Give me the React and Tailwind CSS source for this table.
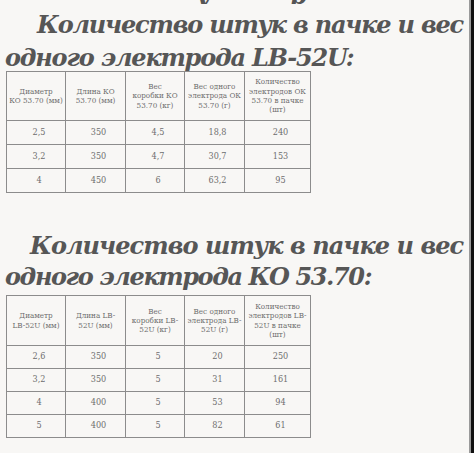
import React from "react";

const headFont = { fontFamily: '"DejaVu Serif", serif' };
const cellFont = { fontFamily: '"DejaVu Serif Condensed", "DejaVu Serif", serif' };

function Table({ head, rows, headH, rowH, className }) {
  const widths = ["w-[59px]", "w-[60px]", "w-[59px]", "w-[60px]", "w-[66px]"];
  return (
    <table className={`border-collapse table-fixed ml-[6px] w-[305px] text-[#6e6e6e] ${className}`} style={cellFont}>
      <tbody>
        <tr className={headH}>
          {head.map((lines, i) => (
            <td key={i} className={`${widths[i]} border border-[#8c8c8c] text-center align-middle text-[8px] leading-[9.3px] p-0`}>
              {lines.map((l, j) => (
                <div key={j} className="whitespace-nowrap">{l}</div>
              ))}
            </td>
          ))}
        </tr>
        {rows.map((r, i) => (
          <tr key={i} className={rowH}>
            {r.map((c, j) => (
              <td key={j} className="border border-[#8c8c8c] text-center align-middle text-[9px] p-0 pl-[6px]">
                {c}
              </td>
            ))}
          </tr>
        ))}
      </tbody>
    </table>
  );
}

export default function App() {
  return (
    <div className="w-[474px] h-[453px] flex bg-[#f8f7f5] overflow-hidden">
      <div className="flex-1 flex flex-col">
        <div className="h-[4px] overflow-hidden relative">
          <div className="absolute left-[196px] top-[-22px] text-[24px] font-bold italic text-[#555]" style={headFont}>у</div>
          <div className="absolute left-[290px] top-[-22px] text-[24px] font-bold italic text-[#555]" style={headFont}>р</div>
        </div>
        <div className="text-[24px] leading-[33px] tracking-[-1.2px] font-bold italic text-[#565656] mt-[4px] pl-[5px]" style={headFont}>
          <div className="pl-[32px] whitespace-nowrap">Количество штук в пачке и вес</div>
          <div className="whitespace-nowrap">одного электрода LB-52U:</div>
        </div>
        <Table
          className="mt-[-3px]"
          headH="h-[49px]"
          rowH="h-[24px]"
          head={[
            ["Диаметр", "КО 53.70 (мм)"],
            ["Длина КО", "53.70 (мм)"],
            ["Вес", "коробки КО", "53.70 (кг)"],
            ["Вес одного", "электрода ОК", "53.70 (г)"],
            ["Количество", "электродов ОК", "53.70 в пачке", "(шт)"],
          ]}
          rows={[
            ["2,5", "350", "4,5", "18,8", "240"],
            ["3,2", "350", "4,7", "30,7", "153"],
            ["4", "450", "6", "63,2", "95"],
          ]}
        />
        <div className="text-[24px] leading-[31px] font-bold italic text-[#565656] mt-[37px] pl-[5px]" style={headFont}>
          <div className="pl-[25px] whitespace-nowrap tracking-[-0.95px]">Количество штук в пачке и вес</div>
          <div className="whitespace-nowrap tracking-[-1.4px]">одного электрода КО 53.70:</div>
        </div>
        <Table
          className="mt-[3px]"
          headH="h-[50px]"
          rowH="h-[23px]"
          head={[
            ["Диаметр", "LB-52U  (мм)"],
            ["Длина LB-", "52U (мм)"],
            ["Вес", "коробки LB-", "52U (кг)"],
            ["Вес одного", "электрода LB-", "52U (г)"],
            ["Количество", "электродов LB-", "52U в пачке", "(шт)"],
          ]}
          rows={[
            ["2,6", "350", "5", "20", "250"],
            ["3,2", "350", "5", "31", "161"],
            ["4", "400", "5", "53", "94"],
            ["5", "400", "5", "82", "61"],
          ]}
        />
      </div>
      <div className="w-[2px] bg-[#9a9a9a]" />
      <div className="w-[3px] bg-[#111]" />
    </div>
  );
}
